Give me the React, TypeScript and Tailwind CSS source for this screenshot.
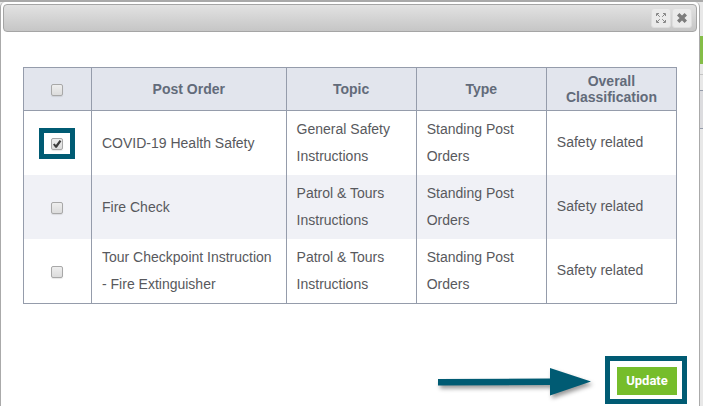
const rows = [
    { name: 'COVID-19 Health Safety', topic: 'General Safety Instructions', checked: true },
    { name: 'Fire Check', topic: 'Patrol & Tours Instructions', checked: false },
    { name: 'Tour Checkpoint Instruction - Fire Extinguisher', topic: 'Patrol & Tours Instructions', checked: false },
]

function Checkbox({ label, checked = false }: { label: string; checked?: boolean }) {
    return (
        <span className="grid h-3 w-3">
            <input
                type="checkbox"
                aria-label={label}
                defaultChecked={checked}
                className="peer col-start-1 row-start-1 h-3 w-3 appearance-none rounded-[2px] border border-[#a8a8a8] bg-linear-to-b from-[#eeeeee] to-[#dcdcdc] shadow-[0_1px_1px_#00000018]"
            />
            <svg viewBox="0 0 12 12" className="pointer-events-none invisible col-start-1 row-start-1 h-3 w-3 peer-checked:visible">
                <path d="M2 6.6 3.6 5.4 4.9 6.9 8.6 2 10.4 3.2 5.8 9.8H4.4Z" fill="#3c3c3c" />
            </svg>
        </span>
    )
}

function TitleBar() {
    return (
        <header className="flex h-7 items-center justify-end gap-px rounded-[4px] border border-[#a5a5a5] bg-linear-to-b from-[#e2e2e2] to-[#c6c6c6] pr-1">
            <button aria-label="Expand" className="grid h-5 w-5 place-items-center rounded-[3px] border border-[#dedede] bg-[#ebebeb]">
                <svg width="10" height="10" viewBox="0 0 10 10" fill="none" stroke="#888888">
                    <path d="M.5 3V.5H3M7 .5h2.5V3M9.5 7v2.5H7M3 9.5H.5V7M1 1l2.8 2.8M9 1 6.2 3.8M9 9 6.2 6.2M1 9l2.8-2.8" />
                </svg>
            </button>
            <button aria-label="Close" className="grid h-5 w-5 place-items-center rounded-[3px] border border-[#dedede] bg-[#ebebeb]">
                <svg width="10" height="10" viewBox="0 0 10 10" stroke="#7c7c7c" strokeWidth="3.4">
                    <path d="m1.2 1.2 7.6 7.6M8.8 1.2 1.2 8.8" />
                </svg>
            </button>
        </header>
    )
}

function PostOrderTable() {
    return (
        <table className="w-full table-fixed border-collapse border border-[#959cab] text-sm text-[#58595d]">
            <colgroup>
                <col className="w-[68px]" />
                <col className="w-[29.8%]" />
                <col />
                <col />
                <col />
            </colgroup>
            <thead>
                <tr className="h-[43px] border-b border-[#959cab] bg-[#e2e5ed] leading-4 text-[#626b7a]">
                    <th className="border-r border-[#959cab] p-0">
                        <div className="flex justify-center pt-px pr-0.5">
                            <Checkbox label="Select all" />
                        </div>
                    </th>
                    <th className="border-r border-[#959cab] p-0">Post Order</th>
                    <th className="border-r border-[#959cab] p-0">Topic</th>
                    <th className="border-r border-[#959cab] p-0">Type</th>
                    <th className="p-0">Overall Classification</th>
                </tr>
            </thead>
            <tbody>
                {rows.map((row) => (
                    <tr key={row.name} className="h-16 leading-[27px] even:bg-[#f0f1f6]">
                        <td className="border-r border-[#959cab] p-0">
                            <div className="flex justify-center pr-0.5">
                                {row.checked ? (
                                    <div className="border-5 border-[#005b73] px-[7px] pt-[5px] pb-1">
                                        <Checkbox label={row.name} checked />
                                    </div>
                                ) : (
                                    <div className="pt-0.5">
                                        <Checkbox label={row.name} />
                                    </div>
                                )}
                            </div>
                        </td>
                        <td className="border-r border-[#959cab] px-2.5 py-[5px]">{row.name}</td>
                        <td className="border-r border-[#959cab] px-2.5 py-[5px]">{row.topic}</td>
                        <td className="border-r border-[#959cab] px-2.5 py-[5px]">Standing Post Orders</td>
                        <td className="px-2.5 pt-1 pb-1.5">Safety related</td>
                    </tr>
                ))}
            </tbody>
        </table>
    )
}

function Arrow() {
    return (
        <svg width="158" height="36" viewBox="0 0 158 36" className="drop-shadow-[2px_3px_2px_#00000066]">
            <path d="M0 15 112 14.5V4l41 13.5L112 31.5V21L0 21.5Z" fill="#005b73" />
        </svg>
    )
}

export default function App() {
    return (
        <div className="flex min-h-screen border-t-2 border-[#a9a9a9] bg-[#e8e8e8] font-['Liberation_Sans',Arial,sans-serif]">
            <main className="min-w-0 flex-1 rounded-t-[5px] border-x border-[#aaaaaa] bg-white px-0.5 pt-0.5">
                <TitleBar />
                <div className="px-5 pt-[35px]">
                    <PostOrderTable />
                </div>
                <footer className="flex items-start justify-end gap-[9px] pt-[52px] pr-2.5">
                    <div className="pt-2">
                        <Arrow />
                    </div>
                    <div className="border-5 border-[#005b73] pt-1.5 pr-[5px] pb-1 pl-[7px]">
                        <button className="block h-7 w-[60px] bg-[#76bd2b] font-['Roboto',sans-serif] text-[13px] font-bold text-white">
                            Update
                        </button>
                    </div>
                </footer>
            </main>
            <aside className="w-[3px]">
                <div className="h-[34px]" />
                <div className="h-7 bg-[#84bd47]" />
                <div className="h-[11px] border-b border-[#c4c4c4]" />
                <div className="h-4 border-b border-[#959cab]" />
                <div className="h-[38px] border-b border-[#959cab] bg-[#dcdcdf]" />
            </aside>
        </div>
    )
}
